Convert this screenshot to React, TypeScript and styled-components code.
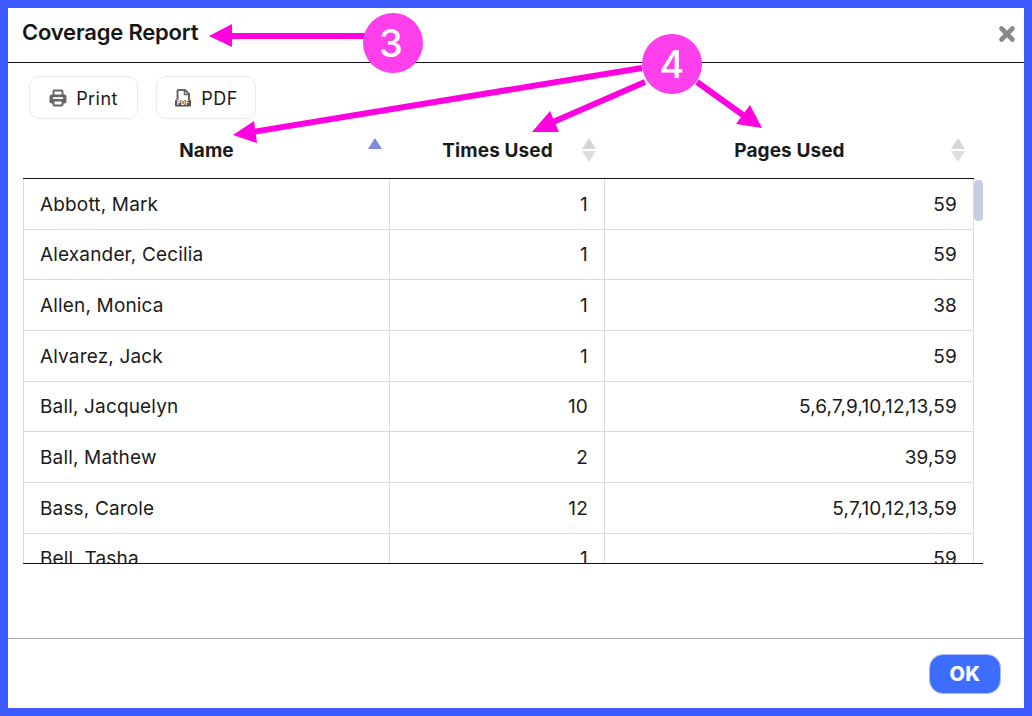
import React from "react";
import styled, { createGlobalStyle } from "styled-components";

const Global = createGlobalStyle`
  html, body { margin: 0; padding: 0; }
  body { font-family: Inter, "Liberation Sans", sans-serif; background: #3d5afe; }
  * { box-sizing: border-box; }
`;

const Frame = styled.div`
  position: relative;
  width: 1032px;
  height: 716px;
  padding: 8px;
  background: #3d5afe;
  overflow: hidden;
`;
const Dialog = styled.div`
  width: 1016px;
  height: 700px;
  background: #fff;
  display: flex;
  flex-direction: column;
`;
const Header = styled.header`
  height: 55px;
  flex: none;
  border-bottom: 1px solid #111;
  display: flex;
  align-items: center;
  justify-content: space-between;
  padding: 0 8px 6px 14px;
`;
const Title = styled.h1`
  margin: 0;
  font-size: 22px;
  font-weight: 600;
  color: #161616;
  letter-spacing: -0.2px;
`;
const CloseIcon = styled.svg`
  width: 18px;
  height: 18px;
  margin-top: 4px;
  display: block;
`;
const Body = styled.main`
  flex: 1;
  min-height: 0;
  padding: 13px 0 0 15px;
`;
const Toolbar = styled.div`
  display: flex;
  gap: 18px;
  padding-left: 6px;
`;
const ToolButton = styled.button<{ $w: number }>`
  width: ${(p) => p.$w}px;
  height: 43px;
  border: 1px solid #ebebeb;
  border-radius: 10px;
  background: #fff;
  display: flex;
  align-items: center;
  justify-content: center;
  gap: 9px;
  padding: 2px 0 0;
  font: 400 18px Inter, sans-serif;
  letter-spacing: 0.45px;
  color: #1a1a1a;
`;
const ToolIcon = styled.svg`
  width: 18px;
  height: 18px;
  flex: none;
  margin-top: -2px;
`;
const PdfMark = styled.text`
  font: 800 5.5px Inter, sans-serif;
  fill: #fff;
`;
const Columns = styled.div`
  display: grid;
  grid-template-columns: 367px 215px 369px;
  width: 951px;
`;
const HeadRow = styled(Columns)`
  height: 60px;
  border-bottom: 1px solid #111;
`;
const HeadCell = styled.div`
  position: relative;
  text-align: center;
  font-size: 19px;
  font-weight: 700;
  color: #1a1a1a;
  letter-spacing: 0.1px;
  padding-top: 21px;
  line-height: 22px;
`;
const SortIcon = styled.svg<{ $active?: boolean }>`
  position: absolute;
  right: ${(p) => (p.$active ? 7 : 8)}px;
  top: 18px;
  width: 16px;
  height: 26px;
`;
const Scroller = styled.div`
  position: relative;
  width: 960px;
  height: 385px;
  overflow: hidden;
  border-bottom: 1px solid #111;
`;
const Row = styled(Columns)`
  height: 50.67px;
  border-bottom: 1px solid #dcdcdc;
`;
const Cell = styled.div<{ $right?: boolean }>`
  display: flex;
  align-items: center;
  justify-content: ${(p) => (p.$right ? "flex-end" : "flex-start")};
  padding: 1px 16px 0;
  font-size: 19px;
  letter-spacing: 0.16px;
  color: #1a1a1a;
  border-right: 1px solid #dcdcdc;
  &:first-child { border-left: 1px solid #dcdcdc; }
`;
const Thumb = styled.div`
  position: absolute;
  top: 1px;
  right: 0;
  width: 9px;
  height: 41px;
  border-radius: 4px;
  background: #c9cde0;
`;
const Footer = styled.footer`
  height: 70px;
  flex: none;
  border-top: 1px solid #aaa;
  display: flex;
  align-items: flex-start;
  justify-content: flex-end;
  padding: 15px 23px 0 0;
`;
const OkButton = styled.button`
  width: 72px;
  height: 40px;
  border-radius: 14px;
  border: 1px solid #a9bcf5;
  background: #3d6dff;
  color: #fff;
  font: 800 20px Inter, sans-serif;
  letter-spacing: 0.3px;
  padding: 0;
`;
const Overlay = styled.svg`
  position: absolute;
  left: 0;
  top: 0;
  width: 1032px;
  height: 716px;
  pointer-events: none;
`;
const Badge = styled.div<{ $x: number; $y: number; $nudge?: number }>`
  position: absolute;
  left: ${(p) => p.$x - 30}px;
  top: ${(p) => p.$y - 30}px;
  width: 60px;
  height: 60px;
  padding-right: ${(p) => p.$nudge ?? 0}px;
  border-radius: 50%;
  background: #ff3eec;
  color: #fff;
  font-size: 38px;
  font-weight: 500;
  display: flex;
  align-items: center;
  justify-content: center;
`;

const rows: [string, string, string][] = [
  ["Abbott, Mark", "1", "59"],
  ["Alexander, Cecilia", "1", "59"],
  ["Allen, Monica", "1", "38"],
  ["Alvarez, Jack", "1", "59"],
  ["Ball, Jacquelyn", "10", "5,6,7,9,10,12,13,59"],
  ["Ball, Mathew", "2", "39,59"],
  ["Bass, Carole", "12", "5,7,10,12,13,59"],
  ["Bell, Tasha", "1", "59"],
];

const Sort = ({ active }: { active?: boolean }) => (
  <SortIcon viewBox="0 0 16 26" $active={active}>
    <path d="M8 1 L15 12 L1 12 Z" fill={active ? "#7f8cdc" : "#d6d6d6"} />
    {!active && <path d="M8 25 L15 14 L1 14 Z" fill="#dedede" />}
  </SortIcon>
);

const PrintGlyph = () => (
  <ToolIcon viewBox="0 0 18 18">
    <path d="M4.5 6 V2.5 a1 1 0 0 1 1-1 h7 a1 1 0 0 1 1 1 V6" fill="none" stroke="#666" strokeWidth="2" />
    <rect x="0.5" y="5.5" width="17" height="9" rx="2.5" fill="#666" />
    <rect x="4" y="8.2" width="10" height="1.8" fill="#fff" />
    <rect x="4.5" y="11.5" width="9" height="5" rx="1" fill="#fff" stroke="#666" strokeWidth="2" />
  </ToolIcon>
);

const PdfGlyph = () => (
  <ToolIcon viewBox="0 0 18 18">
    <path d="M3.5 12 V2 a1 1 0 0 1 1-1 h6.5 l4 4 V12" fill="none" stroke="#666" strokeWidth="2" />
    <path d="M10.5 1 V5.5 H15" fill="none" stroke="#666" strokeWidth="1.6" />
    <rect x="1" y="11" width="16" height="6.4" rx="0.8" fill="#555" />
    <PdfMark x="9" y="16.2" textAnchor="middle">PDF</PdfMark>
  </ToolIcon>
);

const MAGENTA = "#ff00e0";

export default function App() {
  return (
    <Frame>
      <Global />
      <Dialog>
        <Header>
          <Title>Coverage Report</Title>
          <CloseIcon viewBox="0 0 18 18">
            <path d="M3.5 3.5 L14.5 14.5 M14.5 3.5 L3.5 14.5" stroke="#8a8a8a" strokeWidth="4.6" strokeLinecap="round" />
          </CloseIcon>
        </Header>
        <Body>
          <Toolbar>
            <ToolButton $w={109}>
              <PrintGlyph />
              Print
            </ToolButton>
            <ToolButton $w={100}>
              <PdfGlyph />
              PDF
            </ToolButton>
          </Toolbar>
          <HeadRow>
            <HeadCell>
              Name
              <Sort active />
            </HeadCell>
            <HeadCell>
              Times Used
              <Sort />
            </HeadCell>
            <HeadCell>
              Pages Used
              <Sort />
            </HeadCell>
          </HeadRow>
          <Scroller>
            {rows.map((r) => (
              <Row key={r[0]}>
                <Cell>{r[0]}</Cell>
                <Cell $right>{r[1]}</Cell>
                <Cell $right>{r[2]}</Cell>
              </Row>
            ))}
            <Thumb />
          </Scroller>
        </Body>
        <Footer>
          <OkButton>OK</OkButton>
        </Footer>
      </Dialog>
      <Overlay viewBox="0 0 1032 716">
        <g stroke={MAGENTA} strokeWidth="6" fill="none">
          <path d="M365 36 L228 36" />
          <path d="M642 68 L252 132" />
          <path d="M645 82 L553 122" />
          <path d="M697 82 L743 115" />
        </g>
        <g fill={MAGENTA}>
          <path d="M209 36 L232 24 L232 47 Z" />
          <path d="M233 135 L254 121 L257 143 Z" />
          <path d="M532 132 L550 111 L559 132 Z" />
          <path d="M762 128 L750 105 L736 124 Z" />
        </g>
      </Overlay>
      <Badge $x={393} $y={43} $nudge={4}>3</Badge>
      <Badge $x={672} $y={64}>4</Badge>
    </Frame>
  );
}
